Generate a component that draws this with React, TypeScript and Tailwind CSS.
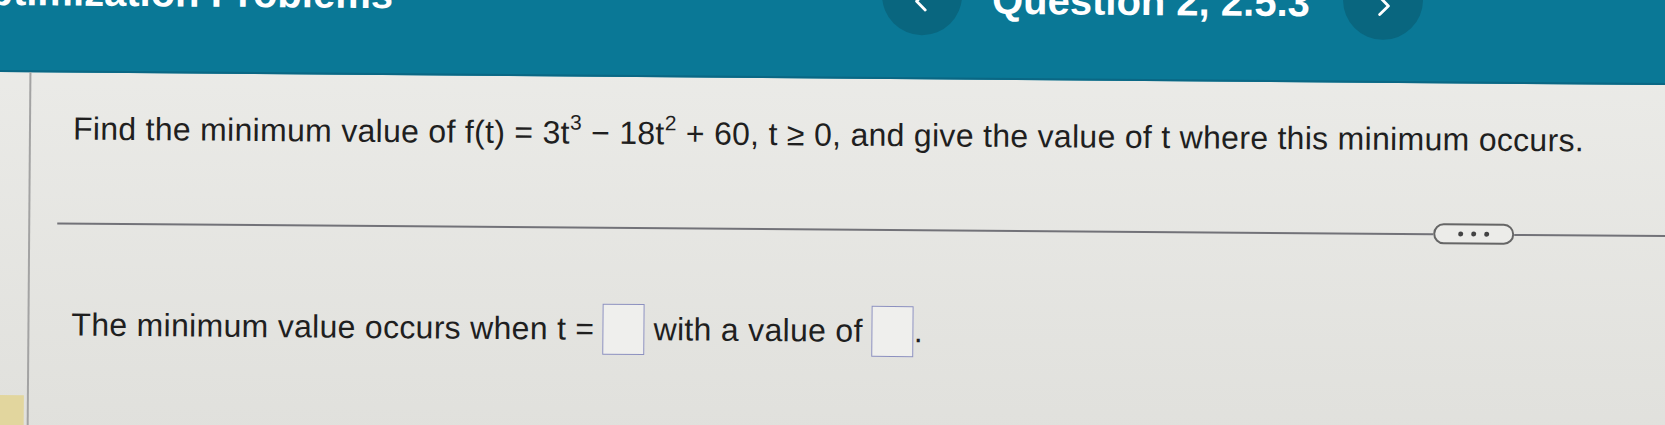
import React from 'react';

function Chevron({ dir }: { dir: 'left' | 'right' }) {
  return (
    <svg width="26" height="26" viewBox="0 0 24 24" fill="none" stroke="white" strokeWidth="2.6" strokeLinecap="round" strokeLinejoin="round">
      {dir === 'left' ? <path d="M15 4 7 12l8 8" /> : <path d="M9 4l8 8-8 8" />}
    </svg>
  );
}

function AnswerBox() {
  return <span className="inline-block w-[42px] h-[51px] align-[-15px] border-[1.5px] border-[#8c90bf] bg-[#efefed]" />;
}

export default function App() {
  return (
    <div className="w-[1665px] h-[425px] overflow-hidden bg-[#e6e6e3]">
      <div className="-ml-[20px] -mt-[20px] w-[1720px] h-[460px] origin-[20px_20px] rotate-[0.45deg] flex flex-col bg-linear-to-b from-[#ededea] to-[#e0e0dc] font-['Liberation_Sans',Arial,sans-serif]">
        {/* top bar */}
        <header className="h-[92px] shrink-0 bg-[#0a7896] border-b-2 border-[#0a6784] flex items-start text-white font-bold text-[40px] leading-none">
          <div className="w-[413px] -mt-[9px] flex justify-end whitespace-nowrap">Optimization Problems</div>
          <button className="ml-[489px] -mt-[32px] w-[80px] h-[80px] shrink-0 rounded-full bg-[#09667f] flex items-center justify-center pt-[12px]">
            <Chevron dir="left" />
          </button>
          <div className="ml-[30px] w-[319px] -mt-[8px] whitespace-nowrap">Question 2, 2.5.3</div>
          <button className="ml-[32px] -mt-[31px] w-[80px] h-[80px] shrink-0 rounded-full bg-[#09667f] flex items-center justify-center pt-[12px]">
            <Chevron dir="right" />
          </button>
        </header>

        <div className="flex flex-1">
          <aside className="w-[52px] shrink-0 border-r-2 border-[#a3a3a3] flex flex-col justify-end">
            <div className="h-[45px] w-[47px] bg-[#e2d69e]" />
          </aside>

          <main className="flex-1 pl-[42px] pt-[35px] text-[#1f1f1f] text-[32px] tracking-[0.3px]">
            <p className="leading-[30px] whitespace-nowrap">
              Find the minimum value of f(t) = 3t<span className="text-[21px] leading-none align-[14px]">3</span> − 18t
              <span className="text-[21px] leading-none align-[14px]">2</span> + 60, t ≥ 0, and give the value of t where this minimum occurs.
            </p>

            <div className="mt-[69px] -ml-[15px] flex items-center h-[21px]">
              <div className="w-[1376px] h-[2px] bg-[#727278]" />
              <div className="w-[81px] h-[21px] shrink-0 rounded-full border-2 border-[#666] bg-[#ecece9] flex items-center justify-center gap-[8px]">
                <span className="w-[5px] h-[5px] rounded-full bg-[#444]" />
                <span className="w-[5px] h-[5px] rounded-full bg-[#444]" />
                <span className="w-[5px] h-[5px] rounded-full bg-[#444]" />
              </div>
              <div className="flex-1 h-[2px] bg-[#727278]" />
            </div>

            <p className="mt-[66px] leading-[30px] whitespace-nowrap">
              The minimum value occurs when t =<span className="ml-[8px]" />
              <AnswerBox /> with a value of <AnswerBox />.
            </p>
          </main>
        </div>
      </div>
    </div>
  );
}
